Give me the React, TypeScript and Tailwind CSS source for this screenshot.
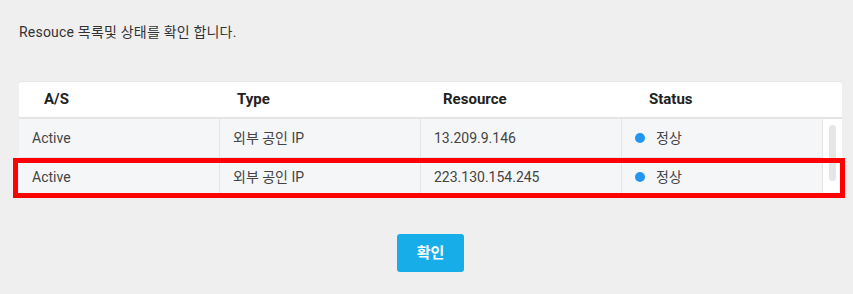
import React from "react";

const rows = [
  { as: "Active", type: "외부 공인 IP", res: "13.209.9.146", status: "정상" },
  { as: "Active", type: "외부 공인 IP", res: "223.130.154.245", status: "정상" },
];

export default function App() {
  return (
    <div
      className="w-[853px] h-[294px] bg-[#efefef] px-[19px] pt-[22px] overflow-hidden"
      style={{ fontFamily: "Roboto, 'Noto Sans CJK KR', sans-serif" }}
    >
      <p className="text-[14px] leading-[20px] tracking-[0.2px] text-[#333]">Resouce 목록및 상태를 확인 합니다.</p>
      <div className="relative mt-[39px] w-[823px] rounded-[3px] border-t border-[#e6e6e6] bg-white">
        <div className="grid h-[37px] grid-cols-[201px_201px_201px_220px] items-center border-b-2 border-[#e4e4e4] text-[15px] font-bold text-[#222]">
          <div className="pl-[25px]">A/S</div>
          <div className="pl-[17px]">Type</div>
          <div className="pl-[22px]">Resource</div>
          <div className="pl-[27px]">Status</div>
        </div>
        <div className="flex bg-[#f5f6f8]">
          <div className="w-[803px]">
            {rows.map((r, i) => (
              <div
                key={i}
                className="grid h-[39px] grid-cols-[201px_201px_201px_200px] items-center border-b border-[#e4e4e4] text-[14px] text-[#444]"
              >
                <div className="h-full flex items-center pl-[13px] border-r border-[#e4e4e4]">{r.as}</div>
                <div className="h-full flex items-center pl-[13px] border-r border-[#e4e4e4]">{r.type}</div>
                <div className="h-full flex items-center pl-[13px] border-r border-[#e4e4e4]">{r.res}</div>
                <div className="h-full flex items-center pl-[13px] gap-[11px]">
                  <span className="inline-block h-[10px] w-[10px] rounded-full bg-[#2196f3]" />
                  {r.status}
                </div>
              </div>
            ))}
          </div>
          <div className="flex w-[20px] justify-center border-l border-[#e4e4e4] bg-white pt-[6px]">
            <div className="h-[56px] w-[7px] rounded-full bg-[#e6e6e6]" />
          </div>
        </div>
        <div className="pointer-events-none absolute left-[-6px] right-[-3px] top-[76px] h-[40px] border-[5px] border-[#ff0000]" />
      </div>
      <div className="mt-[37px] flex w-[823px] justify-center">
        <button className="h-[38px] w-[67px] rounded-[3px] bg-[#17ade8] text-[15px] font-bold text-white">
          확인
        </button>
      </div>
    </div>
  );
}
